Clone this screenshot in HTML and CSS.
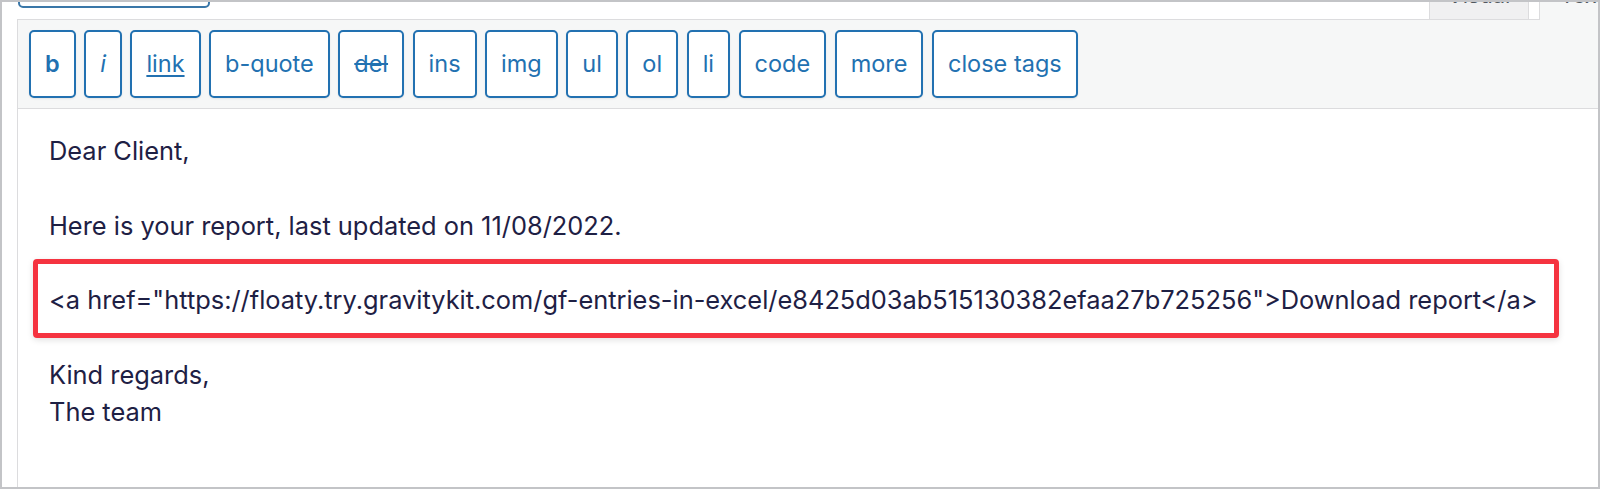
FILE: index.html
```html
<!DOCTYPE html>
<html lang="en">
<head>
<meta charset="utf-8">
<title>Text editor</title>
<link rel="stylesheet" href="styles.css">
</head>
<body>
<div class="frame">
  <div class="wrap">
    <div class="strip">
      <div class="strip-fill"><div class="media-btn"></div></div>
      <div class="tab tab-visual"><span>Visual</span></div>
      <div class="tab-gap"></div>
      <div class="tab tab-text"><span>Text</span></div>
    </div>
    <div class="editor">
      <div class="toolbar">
        <button class="qt qt-b">b</button>
        <button class="qt qt-i">i</button>
        <button class="qt qt-link">link</button>
        <button class="qt">b-quote</button>
        <button class="qt qt-del">del</button>
        <button class="qt">ins</button>
        <button class="qt">img</button>
        <button class="qt">ul</button>
        <button class="qt">ol</button>
        <button class="qt">li</button>
        <button class="qt">code</button>
        <button class="qt">more</button>
        <button class="qt">close tags</button>
      </div>
      <div class="content">
        <div class="line">Dear Client,</div>
        <div class="line"></div>
        <div class="line">Here is your report, last updated on 11/08/2022.</div>
        <div class="line"></div>
        <div class="line"><span class="highlight">&lt;a href="https://floaty.try.gravitykit.com/gf-entries-in-excel/e8425d03ab515130382efaa27b725256"&gt;Download report&lt;/a&gt;</span></div>
        <div class="line"></div>
        <div class="line">Kind regards,</div>
        <div class="line">The team</div>
      </div>
    </div>
  </div>
</div>
</body>
</html>
```

FILE: styles.css
```css
* { box-sizing: border-box; }

html, body {
  margin: 0;
  padding: 0;
  background: #ffffff;
}

body {
  font-family: Inter, "Noto Sans", "Liberation Sans", sans-serif;
}

.frame {
  width: 1600px;
  height: 489px;
  border: 2px solid #c3c4c7;
  overflow: hidden;
  background: #ffffff;
}

.wrap {
  height: 100%;
  padding-left: 15px;
  display: flex;
  flex-direction: column;
}

/* top strip: media button + editor tabs (cut off by the frame) */
.strip {
  height: 18px;
  display: flex;
  flex-shrink: 0;
}

.strip-fill {
  flex: 1;
  border-bottom: 1px solid #dcdcde;
  overflow: hidden;
  display: flex;
  align-items: flex-end;
}

.media-btn {
  width: 192px;
  height: 30px;
  flex-shrink: 0;
  margin-left: 1px;
  margin-bottom: 11px;
  border: 2px solid #3a77a8;
  border-radius: 5px;
  background: #ffffff;
}

.tab {
  overflow: hidden;
  font-size: 22px;
  line-height: 22px;
  color: #50575e;
}

.tab span {
  display: block;
  margin-top: -18px;
}

.tab-visual {
  width: 100px;
  background: #f0f0f1;
  border: 1px solid #dcdcde;
  border-top: 0;
  text-align: center;
}

.tab-gap {
  width: 10px;
  border-bottom: 1px solid #dcdcde;
}

.tab-text {
  width: 59px;
  background: #f6f7f7;
  border-left: 1px solid #dcdcde;
  padding-left: 20px;
  white-space: nowrap;
}

/* editor */
.editor {
  flex: 1;
  display: flex;
  flex-direction: column;
  border-left: 1px solid #dcdcde;
}

.toolbar {
  background: #f6f7f7;
  border-bottom: 1px solid #dcdcde;
  padding: 10px 0 10px 11px;
  display: flex;
  gap: 8.5px;
}

.qt {
  height: 68px;
  padding: 0 14px;
  border: 2px solid #2271b1;
  border-radius: 5px;
  background: #ffffff;
  color: #2271b1;
  font-family: Inter, "Noto Sans", "Liberation Sans", sans-serif;
  font-size: 23.5px;
  line-height: 1;
  box-shadow: 0 1px 2px rgba(0, 0, 0, 0.08);
  display: flex;
  align-items: center;
  justify-content: center;
}

.qt-b { font-weight: 600; }
.qt-i { font-style: italic; }
.qt-link { text-decoration: underline; text-underline-offset: 3px; }
.qt-del { text-decoration: line-through; }

.content {
  flex: 1;
  background: #ffffff;
  padding: 23px 0 0 31px;
  font-size: 25.4px;
  line-height: 37.3px;
  color: #1e2044;
}

.line {
  height: 37.3px;
  white-space: nowrap;
}

.highlight {
  position: relative;
  display: inline-block;
}

.highlight::after {
  content: "";
  position: absolute;
  top: -22px;
  bottom: -20px;
  left: -16px;
  right: -22px;
  border: 5px solid #f53340;
  border-radius: 4px;
  box-shadow: 0 2px 6px rgba(0, 0, 0, 0.12);
}
```
